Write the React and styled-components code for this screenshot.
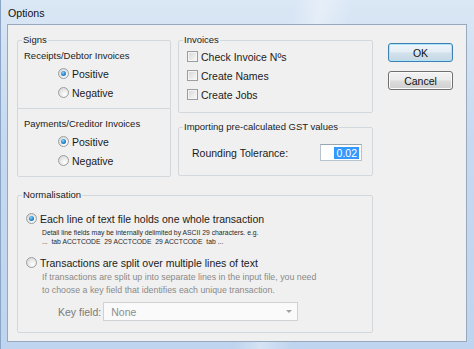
import React from 'react'
import styled, { createGlobalStyle } from 'styled-components'

const GlobalStyle = createGlobalStyle`
  html, body {
    margin: 0;
    padding: 0;
    background: #c9daef;
  }
  body {
    font-family: "Liberation Sans", Arial, sans-serif;
    color: #1b1b1b;
  }
`

export default function App() {
  return (
    <>
      <GlobalStyle />
      <Window>
        <TitleBar>Options</TitleBar>
        <Client>
          <MainColumn>
            <TopRow>
              <Group $width={154} $height={143}>
                <Legend>Signs</Legend>
                <SubPanel $top={4} $bottom={6}>
                  <Heading>Receipts/Debtor Invoices</Heading>
                  <RadioRow $indent={40}><Radio $checked />Positive</RadioRow>
                  <RadioRow $indent={40}><Radio />Negative</RadioRow>
                </SubPanel>
                <SubPanel $top={9} $bottom={5} $divided>
                  <Heading>Payments/Creditor Invoices</Heading>
                  <RadioRow $indent={40}><Radio $checked />Positive</RadioRow>
                  <RadioRow $indent={40}><Radio />Negative</RadioRow>
                </SubPanel>
              </Group>
              <MiddleColumn>
                <Group $height={79}>
                  <Legend>Invoices</Legend>
                  <CheckList>
                    <CheckRow><Checkbox />Check Invoice Nºs</CheckRow>
                    <CheckRow><Checkbox />Create Names</CheckRow>
                    <CheckRow><Checkbox />Create Jobs</CheckRow>
                  </CheckList>
                </Group>
                <Group $height={55}>
                  <Legend>Importing pre-calculated GST values</Legend>
                  <ToleranceRow>
                    <span>Rounding Tolerance:</span>
                    <NumberBox><Selected>0.02</Selected></NumberBox>
                  </ToleranceRow>
                </Group>
              </MiddleColumn>
            </TopRow>
            <Group $height={144}>
              <Legend>Normalisation</Legend>
              <NormBody>
                <RadioRow $indent={8} $height={19}><Radio $checked />Each line of text file holds one whole transaction</RadioRow>
                <DetailText>
                  Detail line fields may be internally delimited by ASCII 29 characters. e.g.<br />
                  ...&nbsp; tab ACCTCODE&nbsp; 29 ACCTCODE&nbsp; 29 ACCTCODE&nbsp; tab ...
                </DetailText>
                <RadioRow $indent={8} $height={17} $gap={8}><Radio />Transactions are split over multiple lines of text</RadioRow>
                <GreyText>
                  If transactions are split up into separate lines in the input file, you need<br />
                  to choose a key field that identifies each unique transaction.
                </GreyText>
                <KeyRow>
                  <KeyLabel>Key field:</KeyLabel>
                  <DropDown>
                    <span>None</span>
                    <Arrow />
                  </DropDown>
                </KeyRow>
              </NormBody>
            </Group>
          </MainColumn>
          <ButtonColumn>
            <Button $default>OK</Button>
            <Button>Cancel</Button>
          </ButtonColumn>
        </Client>
      </Window>
    </>
  )
}

const Window = styled.div`
  width: 474px;
  height: 349px;
  box-sizing: border-box;
  padding: 0 7px 7px 6px;
  display: flex;
  flex-direction: column;
  background:
    linear-gradient(100deg, rgba(255,255,255,0) 55%, rgba(255,255,255,0.35) 60%, rgba(255,255,255,0) 66%),
    linear-gradient(180deg, #dae7f5 0%, #c6d9ef 40%, #bfd4ee 100%);
  border-left: 1px solid #8aa5c6;
  overflow: hidden;
`

const TitleBar = styled.div`
  height: 24px;
  flex: none;
  display: flex;
  align-items: center;
  padding: 1px 0 0 1px;
  box-sizing: border-box;
  font-size: 10.6px;
  color: #111;
`

const Client = styled.div`
  flex: 1;
  display: flex;
  align-items: flex-start;
  box-sizing: border-box;
  padding: 9px 0 0 9px;
  background: #f0f0f0;
  border: 1px solid #97a9bf;
`

const MainColumn = styled.div`
  width: 356px;
  display: flex;
  flex-direction: column;
  gap: 12px;
`

const TopRow = styled.div`
  display: flex;
  gap: 7px;
`

const MiddleColumn = styled.div`
  flex: 1;
  display: flex;
  flex-direction: column;
  gap: 8px;
`

const Group = styled.fieldset`
  margin: 0;
  padding: 0;
  min-width: 0;
  box-sizing: border-box;
  width: ${p => (p.$width ? `${p.$width}px` : 'auto')};
  height: ${p => p.$height}px;
  border: 1px solid #d3d8dc;
  border-radius: 2px;
  display: flex;
  flex-direction: column;
`

const Legend = styled.legend`
  margin-left: 4px;
  padding: 0 1px;
  font-size: 9.5px;
  line-height: 12px;
  color: #1b1b1b;
`

const SubPanel = styled.div`
  display: flex;
  flex-direction: column;
  padding: ${p => p.$top}px 0 ${p => p.$bottom}px 6px;
  border-top: ${p => (p.$divided ? '1px solid #d3d8dc' : 'none')};
`

const Heading = styled.div`
  font-size: 9.5px;
  line-height: 12px;
  margin-bottom: 2px;
`

const RadioRow = styled.label`
  display: flex;
  align-items: center;
  gap: 3px;
  height: ${p => p.$height || 19}px;
  margin-top: ${p => p.$gap || 0}px;
  padding-left: ${p => p.$indent - 6}px;
  font-size: 10.5px;
  color: #1b1b1b;
`

const Radio = styled.span`
  flex: none;
  width: 11px;
  height: 11px;
  box-sizing: border-box;
  border-radius: 50%;
  border: 1px solid #9a9ea2;
  background: radial-gradient(circle at 65% 70%, #ffffff 0%, #e6e6e6 55%, #cfcfcf 100%);
  display: flex;
  align-items: center;
  justify-content: center;

  &::after {
    content: "";
    display: ${p => (p.$checked ? 'block' : 'none')};
    width: 5px;
    height: 5px;
    border-radius: 50%;
    background: radial-gradient(circle at 40% 35%, #8fd3f7 0%, #2a8bd0 50%, #0d4f8a 100%);
  }
`

const CheckList = styled.div`
  display: flex;
  flex-direction: column;
  padding: 1px 0 0 8px;
`

const CheckRow = styled.label`
  display: flex;
  align-items: center;
  gap: 3px;
  height: 19px;
  font-size: 10.5px;
`

const Checkbox = styled.span`
  flex: none;
  width: 11px;
  height: 11px;
  box-sizing: border-box;
  border: 1px solid #9a9ea2;
  background: linear-gradient(135deg, #d5d5d5 0%, #ececec 60%, #fafafa 100%);
  box-shadow: inset 0 0 0 1px #f4f4f4;
`

const ToleranceRow = styled.div`
  display: flex;
  align-items: center;
  justify-content: space-between;
  margin-top: 11px;
  padding: 0 10px 0 13px;
  font-size: 10.5px;
`

const NumberBox = styled.div`
  width: 42px;
  height: 17px;
  box-sizing: border-box;
  display: flex;
  align-items: center;
  justify-content: flex-end;
  padding-right: 2px;
  background: #fff;
  border: 1px solid #b9c3cd;
  border-top-color: #9aa5b0;
`

const Selected = styled.span`
  background: #3399ff;
  color: #fff;
  font-size: 10.5px;
  line-height: 12px;
  padding: 0 2px 0 3px;
`

const NormBody = styled.div`
  display: flex;
  flex-direction: column;
  padding: 8px 0 0 6px;
`

const DetailText = styled.div`
  padding-left: 18px;
  font-size: 6.8px;
  line-height: 9px;
  color: #2a2a2a;
  white-space: nowrap;
`

const GreyText = styled.div`
  padding-left: 18px;
  font-size: 8.8px;
  line-height: 12.5px;
  color: #8a8a8a;
  white-space: nowrap;
`

const KeyRow = styled.div`
  display: flex;
  align-items: center;
  gap: 2px;
  margin-top: 6px;
  padding-left: 34px;
`

const KeyLabel = styled.span`
  font-size: 10.5px;
  color: #7a7a7a;
`

const DropDown = styled.div`
  width: 195px;
  height: 19px;
  box-sizing: border-box;
  display: flex;
  align-items: center;
  justify-content: space-between;
  padding: 0 5px 0 7px;
  background: #fafafa;
  border: 1px solid #cfd2d5;
  font-size: 10.5px;
  color: #8d8d8d;
`

const Arrow = styled.span`
  width: 0;
  height: 0;
  border-left: 3px solid transparent;
  border-right: 3px solid transparent;
  border-top: 3px solid #a0a0a0;
`

const ButtonColumn = styled.div`
  display: flex;
  flex-direction: column;
  gap: 9px;
  margin: 9px 0 0 15px;
`

const Button = styled.button`
  width: 65px;
  height: 19px;
  padding: 0;
  box-sizing: border-box;
  font-family: "Liberation Sans", Arial, sans-serif;
  font-size: 10.5px;
  color: #111;
  border-radius: 3px;
  border: 1px solid ${p => (p.$default ? '#3c7fb1' : '#707070')};
  background: ${p => (p.$default
    ? 'linear-gradient(180deg, #f0f6fa 0%, #e3edf4 48%, #d2e2ec 52%, #c5d8e5 100%)'
    : 'linear-gradient(180deg, #f2f2f2 0%, #ebebeb 48%, #dddddd 52%, #cfcfcf 100%)')};
  box-shadow: inset 0 0 0 1px ${p => (p.$default ? '#aee3f9' : '#fbfbfb')};
`
